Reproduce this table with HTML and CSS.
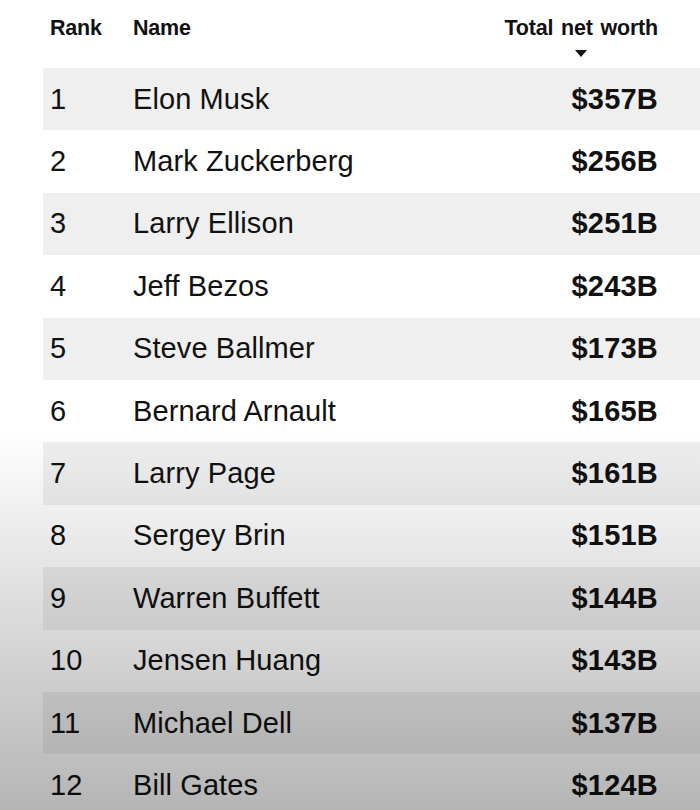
FILE: index.html
```html
<!DOCTYPE html>
<html lang="en">
<head>
<meta charset="utf-8">
<title>Billionaires</title>
<link rel="stylesheet" href="styles.css">
</head>
<body>
<div class="page">
  <table class="rank-table">
    <thead>
      <tr>
        <th class="c-rank">Rank</th>
        <th class="c-name">Name</th>
        <th class="c-worth"><span class="worth-head">Total net worth<span class="sort-arrow"></span></span></th>
      </tr>
    </thead>
    <tbody>
      <tr><td class="c-rank">1</td><td class="c-name">Elon Musk</td><td class="c-worth">$357B</td></tr>
      <tr><td class="c-rank">2</td><td class="c-name">Mark Zuckerberg</td><td class="c-worth">$256B</td></tr>
      <tr><td class="c-rank">3</td><td class="c-name">Larry Ellison</td><td class="c-worth">$251B</td></tr>
      <tr><td class="c-rank">4</td><td class="c-name">Jeff Bezos</td><td class="c-worth">$243B</td></tr>
      <tr><td class="c-rank">5</td><td class="c-name">Steve Ballmer</td><td class="c-worth">$173B</td></tr>
      <tr><td class="c-rank">6</td><td class="c-name">Bernard Arnault</td><td class="c-worth">$165B</td></tr>
      <tr><td class="c-rank">7</td><td class="c-name">Larry Page</td><td class="c-worth">$161B</td></tr>
      <tr><td class="c-rank">8</td><td class="c-name">Sergey Brin</td><td class="c-worth">$151B</td></tr>
      <tr><td class="c-rank">9</td><td class="c-name">Warren Buffett</td><td class="c-worth">$144B</td></tr>
      <tr><td class="c-rank">10</td><td class="c-name">Jensen Huang</td><td class="c-worth">$143B</td></tr>
      <tr><td class="c-rank">11</td><td class="c-name">Michael Dell</td><td class="c-worth">$137B</td></tr>
      <tr><td class="c-rank">12</td><td class="c-name">Bill Gates</td><td class="c-worth">$124B</td></tr>
    </tbody>
  </table>
  <div class="shade"></div>
</div>
</body>
</html>
```
FILE: styles.css
```css
html, body {
  margin: 0;
  padding: 0;
  background: #ffffff;
}
body {
  font-family: "Liberation Sans", Arial, sans-serif;
  color: #111111;
  width: 700px;
  height: 810px;
  overflow: hidden;
}
.page {
  position: relative;
  width: 700px;
  height: 810px;
  padding-left: 43px;
  box-sizing: border-box;
}
.rank-table {
  width: 657px;
  border-collapse: collapse;
  border-spacing: 0;
}
.rank-table th {
  height: 52px;
  padding: 16px 0 0 0;
  vertical-align: top;
  font-size: 21.5px;
  line-height: 24px;
  font-weight: bold;
  letter-spacing: -0.2px;
  text-align: left;
  color: #111111;
}
.rank-table th.c-worth {
  word-spacing: 2px;
}
.rank-table th span.worth-head {
  display: inline-flex;
  flex-direction: column;
  align-items: center;
}
.sort-arrow {
  display: block;
  width: 0;
  height: 0;
  margin-top: 10px;
  border-left: 6px solid transparent;
  border-right: 6px solid transparent;
  border-top: 7px solid #111111;
}
.rank-table td {
  height: 62.4px;
  padding: 0;
  font-size: 29px;
  vertical-align: middle;
  color: #111111;
}
.rank-table tbody tr:nth-child(odd) td {
  background: #efefef;
}
.rank-table .c-rank {
  width: 83px;
  padding-left: 7px;
}
.rank-table td.c-name {
  letter-spacing: 0.1px;
}
.rank-table .c-worth {
  text-align: right;
  padding-right: 42px;
}
.rank-table td.c-worth {
  font-weight: bold;
  font-size: 29px;
  letter-spacing: 0.2px;
}
.shade {
  position: absolute;
  left: 0;
  top: 0;
  width: 700px;
  height: 810px;
  pointer-events: none;
  background: linear-gradient(to bottom, rgba(0,0,0,0) 0, rgba(0,0,0,0) 430px, rgba(0,0,0,0.29) 810px);
}
```
